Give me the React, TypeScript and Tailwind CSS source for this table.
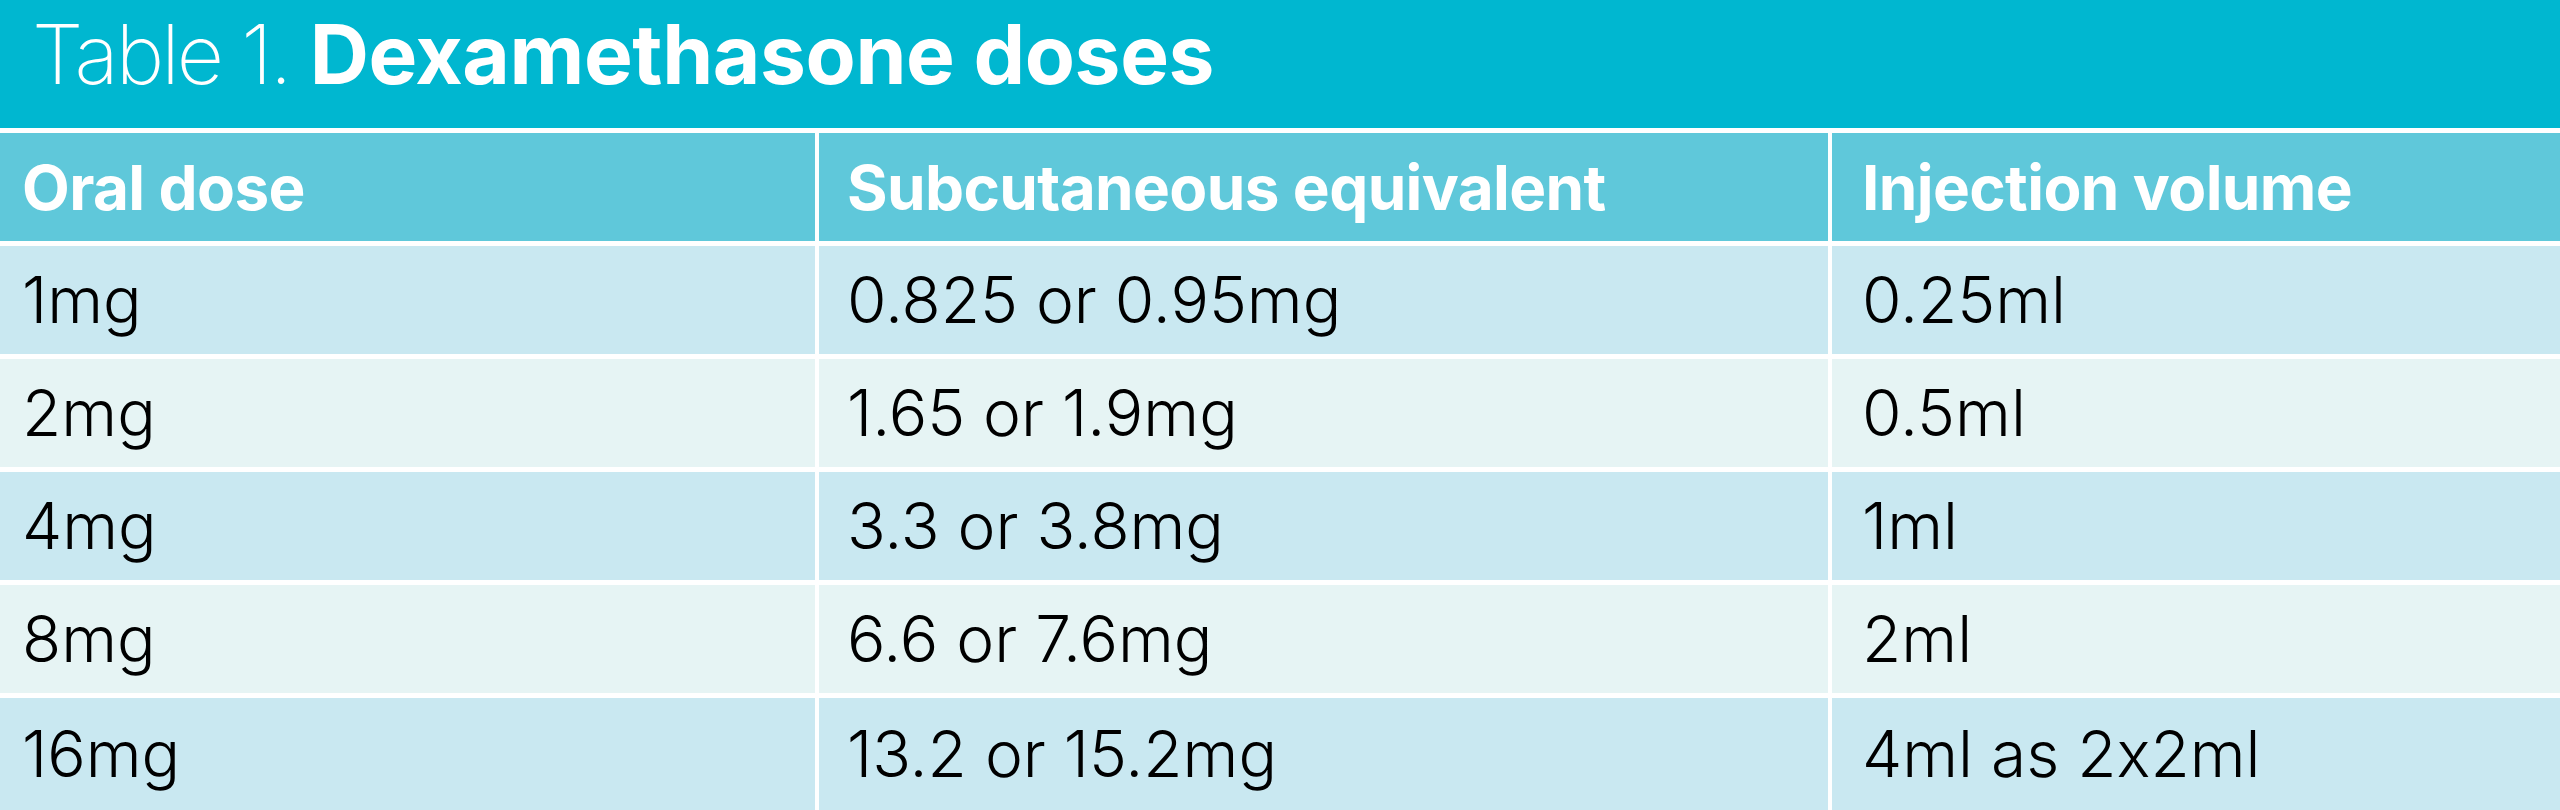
// Dexamethasone dose conversion table
import React from "react";

// Oral dose, subcutaneous equivalent, injection volume
const ROWS = [
  ["1mg", "0.825 or 0.95mg", "0.25ml"],
  ["2mg", "1.65 or 1.9mg", "0.5ml"],
  ["4mg", "3.3 or 3.8mg", "1ml"],
  ["8mg", "6.6 or 7.6mg", "2ml"],
  ["16mg", "13.2 or 15.2mg", "4ml as 2x2ml"],
];

const HEADERS = ["Oral dose", "Subcutaneous equivalent", "Injection volume"];

// Left padding per column, as in the print layout
const PAD = ["pl-[22px]", "pl-[28px]", "pl-[30px]"];

export default function App() {
  return (
    <div className="w-full h-[810px] overflow-hidden bg-white font-['Inter',sans-serif] [font-feature-settings:'calt'_0]">
      {/* Title bar */}
      <div className="h-[128px] bg-[#00b7d0] flex items-center pl-[32px] pb-[18px] text-white text-[82px] leading-none">
        <span className="font-extralight tracking-[-0.035em]">Table 1.&nbsp;</span>
        <span className="font-bold tracking-[-0.005em]">Dexamethasone doses</span>
      </div>

      <div className="mt-[5px] grid grid-cols-[815px_1009px_1fr] gap-x-[4px] gap-y-[5px]">
        {/* Header row */}
        {HEADERS.map((h, i) => (
          <div
            key={h}
            className={`h-[108px] bg-[#5fc8da] flex items-center ${PAD[i]} text-white font-bold text-[62px] tracking-[-0.01em]`}
          >
            {h}
          </div>
        ))}

        {/* Body rows */}
        {ROWS.map((row, r) =>
          row.map((cell, i) => (
            <div
              key={`${r}-${i}`}
              className={`${r === ROWS.length - 1 ? "h-[112px]" : "h-[108px]"} ${
                r % 2 === 0 ? "bg-[#c9e8f1]" : "bg-[#e6f4f4]"
              } flex items-center ${PAD[i]} text-black font-light text-[64px]`}
            >
              {cell}
            </div>
          ))
        )}
      </div>
    </div>
  );
}
